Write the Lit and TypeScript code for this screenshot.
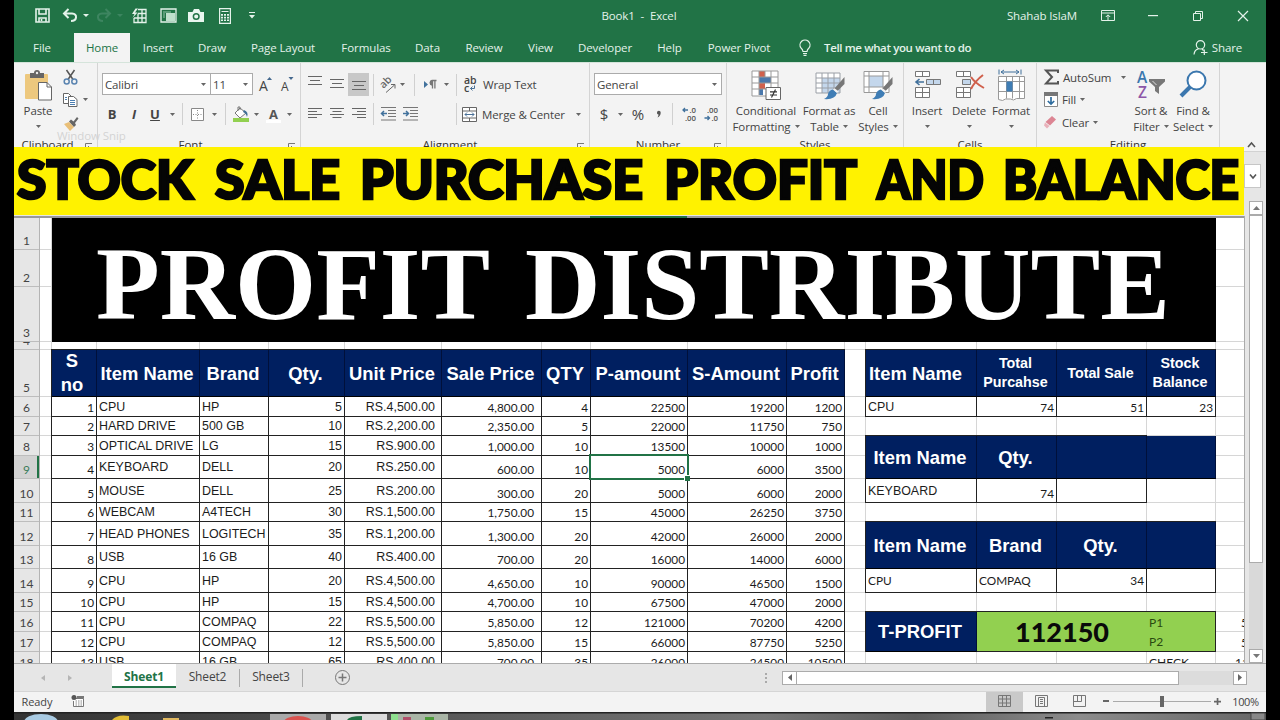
import { LitElement, html, svg, css, nothing } from "lit";
import { customElement } from "lit/decorators.js";

const COLS = [12, 45, 103, 69, 76, 97, 100, 49, 97, 99, 58, 21, 111, 80, 90, 69, 29];
const ROWS = [32, 37, 55, 8, 47, 20, 19, 20, 23, 24, 19, 24, 23, 24, 19, 20, 20, 20];

const ITEMS: string[][] = [
  ["1", "CPU", "HP", "5", "RS.4,500.00", "4,800.00", "4", "22500", "19200", "1200"],
  ["2", "HARD DRIVE", "500 GB", "10", "RS.2,200.00", "2,350.00", "5", "22000", "11750", "750"],
  ["3", "OPTICAL DRIVE", "LG", "15", "RS.900.00", "1,000.00", "10", "13500", "10000", "1000"],
  ["4", "KEYBOARD", "DELL", "20", "RS.250.00", "600.00", "10", "5000", "6000", "3500"],
  ["5", "MOUSE", "DELL", "25", "RS.200.00", "300.00", "20", "5000", "6000", "2000"],
  ["6", "WEBCAM", "A4TECH", "30", "RS.1,500.00", "1,750.00", "15", "45000", "26250", "3750"],
  ["7", "HEAD PHONES", "LOGITECH", "35", "RS.1,200.00", "1,300.00", "20", "42000", "26000", "2000"],
  ["8", "USB", "16 GB", "40", "RS.400.00", "700.00", "20", "16000", "14000", "6000"],
  ["9", "CPU", "HP", "20", "RS.4,500.00", "4,650.00", "10", "90000", "46500", "1500"],
  ["10", "CPU", "HP", "15", "RS.4,500.00", "4,700.00", "10", "67500", "47000", "2000"],
  ["11", "CPU", "COMPAQ", "22", "RS.5,500.00", "5,850.00", "12", "121000", "70200", "4200"],
  ["12", "CPU", "COMPAQ", "12", "RS.5,500.00", "5,850.00", "15", "66000", "87750", "5250"],
  ["13", "USB", "16 GB", "65", "RS.400.00", "700.00", "35", "26000", "24500", "10500"],
];
const KINDS = ["num", "txt", "txt", "qty", "rs", "num sale", "num", "num", "num", "num"];
const HEADS = ["S no", "Item Name", "Brand", "Qty.", "Unit Price", "Sale Price", "QTY", "P-amount", "S-Amount", "Profit"];

interface Cell { r: number; c: number; rs?: number; cs?: number; k: string; t: string; }

const CELLS: Cell[] = [
  ...HEADS.map((t, i) => ({ r: 5, c: i + 2, k: "head first", t })),
  ...ITEMS.flatMap((row, r) => row.map((t, i) => ({ r: r + 6, c: i + 2, k: "box " + KINDS[i], t }))),
  { r: 5, c: 13, k: "head left", t: "Item Name" },
  { r: 5, c: 14, k: "head small", t: "Total Purcahse" },
  { r: 5, c: 15, k: "head small", t: "Total Sale" },
  { r: 5, c: 16, k: "head small", t: "Stock Balance" },
  { r: 6, c: 13, k: "box txt", t: "CPU" },
  { r: 6, c: 14, k: "box num", t: "74" },
  { r: 6, c: 15, k: "box num", t: "51" },
  { r: 6, c: 16, k: "box num", t: "23" },
  { r: 8, c: 13, rs: 2, k: "head", t: "Item Name" },
  { r: 8, c: 14, rs: 2, k: "head", t: "Qty." },
  { r: 8, c: 15, rs: 2, k: "head", t: "" },
  { r: 8, c: 16, rs: 2, k: "head", t: "" },
  { r: 10, c: 13, k: "box txt", t: "KEYBOARD" },
  { r: 10, c: 14, k: "box num", t: "74" },
  { r: 10, c: 15, k: "box num", t: "" },
  { r: 12, c: 13, rs: 2, k: "head", t: "Item Name" },
  { r: 12, c: 14, rs: 2, k: "head", t: "Brand" },
  { r: 12, c: 15, rs: 2, k: "head", t: "Qty." },
  { r: 12, c: 16, rs: 2, k: "head", t: "" },
  { r: 14, c: 13, k: "box cal", t: "CPU" },
  { r: 14, c: 14, k: "box cal", t: "COMPAQ" },
  { r: 14, c: 15, k: "box cal end", t: "34" },
  { r: 14, c: 16, k: "box num", t: "" },
  { r: 16, c: 13, rs: 2, k: "head", t: "T-PROFIT" },
  { r: 16, c: 14, rs: 2, cs: 2, k: "total", t: "112150" },
  { r: 16, c: 16, k: "green", t: "P1" },
  { r: 17, c: 16, k: "green last", t: "P2" },
  { r: 18, c: 16, k: "plain", t: "CHECK" },
  { r: 16, c: 17, k: "plain cut", t: "56075" },
  { r: 17, c: 17, k: "plain cut", t: "56075" },
  { r: 18, c: 17, k: "plain cut wide", t: "112150" },
];

/* Left and top edges of the boxed ranges: [row, col, rowSpan, colSpan] */
const EDGES = [[5, 2, 14, 10], [5, 13, 2, 4], [8, 13, 3, 3], [12, 13, 3, 4], [16, 13, 2, 4]];

const dd = html`<svg class="dd" width="5" height="3" viewBox="0 0 5 3"><path d="M0 0h5L2.5 3z" fill="#666"/></svg>`;
const sep = html`<i class="sep"></i>`;
const launch = html`<svg class="launch" width="8" height="8" viewBox="0 0 8 8" fill="none" stroke="#777"><path d="M.5 7V.5H7M3 3l4 4M7 4v3H4"/></svg>`;
const lines = (ws: number[], mode: string, step = 3) => html`<svg width="14" height="${ws.length * step}" viewBox="0 0 14 ${ws.length * step}" stroke="#666">
  ${ws.map((w, i) => { const x = mode === "l" ? 0 : mode === "r" ? 14 - w : (14 - w) / 2; return svg`<path d="M${x} ${i * step + 0.5}h${w}"/>`; })}</svg>`;

const iconPaste = html`<svg width="30" height="32" viewBox="0 0 30 32"><rect x="2" y="4" width="23" height="25" rx="1" fill="#edc87e"/><path d="M7 3h4a3 3 0 0 1 6 0h4v5H7z" fill="#666"/><circle cx="14" cy="3" r="1.2" fill="#eee"/><path d="M15.500 12.500h8.500l4.500 4.500v13H15.500z" fill="#fff" stroke="#666"/><path d="M24 12.500V17h4.500" fill="none" stroke="#666"/></svg>`;
const iconCut = html`<svg width="15" height="15" viewBox="0 0 15 15" fill="none" stroke-width="1.500"><path d="M3.500 0l6.500 9.500M11.500 0L5 9.500" stroke="#555"/><circle cx="3.700" cy="11.500" r="2.500" stroke="#5a84b0"/><circle cx="11.300" cy="11.500" r="2.500" stroke="#5a84b0"/></svg>`;
const iconCopy = html`<svg width="15" height="14" viewBox="0 0 15 14" fill="#fff" stroke="#666"><path d="M.5.5h5l3 3v7h-8z"/><path d="M5.500 3.500h5l3.500 3v7H5.500z"/><path d="M7 7.500h5M7 9.500h5M7 11.500h5M2 4.500h2M2 6.500h2" stroke="#4c7eb0"/></svg>`;
const iconBrush = html`<svg width="16" height="14" viewBox="0 0 16 14"><path d="M1 7l5-2 5 5-4 4z" fill="#e9bf78"/><path d="M6 4.500l2-2 2.500 2L14 0l1.500 1.500L12 6l1 2-2 2z" fill="#666"/></svg>`;
const iconBorders = html`<svg width="13" height="13" viewBox="0 0 13 13" fill="#fff" stroke="#888"><path d="M.5.5h12v12H.5z"/><path d="M6.500 2v10M2 6.500h10" stroke-dasharray="1 1.500"/></svg>`;
const iconBucket = html`<svg width="17" height="17" viewBox="0 0 17 17"><path d="M3 7l5-5 6 5-6 5z" fill="#fff" stroke="#777"/><path d="M6 5V1h2v3" fill="none" stroke="#777"/><path d="M12 4q5 2 3 7-1-4-4-5z" fill="#3f6f96"/><path d="M1 12h16v4H1z" fill="#92d050"/></svg>`;
const iconFontColor = html`<svg width="15" height="17" viewBox="0 0 15 17"><text x="7.500" y="12.500" text-anchor="middle" font-family="Open Sans, sans-serif" font-size="13" font-weight="700" fill="#555">A</text><path d="M0 14h15v3H0z" fill="#fff"/></svg>`;
const iconGrow = html`<svg width="14" height="17" viewBox="0 0 14 17"><text x="1" y="14.500" font-family="Open Sans, sans-serif" font-size="14" fill="#444">A</text><path d="M9 4h5l-2.500-3z" fill="#44688e"/></svg>`;
const iconShrink = html`<svg width="14" height="17" viewBox="0 0 14 17"><text x="0" y="14.500" font-family="Open Sans, sans-serif" font-size="12" fill="#444">A</text><path d="M7.500 1h5L10 4z" fill="#44688e"/></svg>`;
const iconOrient = html`<svg width="18" height="16" viewBox="0 0 18 16"><text transform="translate(4.500 12) rotate(-45)" font-family="Open Sans, sans-serif" font-size="10.500" font-weight="600" fill="#666">ab</text><path d="M7 15.500L15.500 8M12 7.500h4v4" fill="none" stroke="#666"/></svg>`;
const iconPilcrow = html`<svg width="13" height="10" viewBox="0 0 13 10"><path d="M0 1l4 3.500L0 8z" fill="#41719c"/><path d="M8 5a2.300 2.300 0 0 1 0-4.500h4.500M8.500.5v8M10.900.5v8" fill="none" stroke="#777" stroke-width="1.300"/><path d="M8 .5h1v4.500H8a2.200 2.200 0 0 1 0-4.500z" fill="#777"/></svg>`;
const iconWrap = html`<svg width="14" height="17" viewBox="0 0 14 17"><text x="1" y="8" font-family="Open Sans, sans-serif" font-size="10.500" font-weight="600" fill="#444">ab</text><text x="1" y="15.500" font-family="Open Sans, sans-serif" font-size="10.500" font-weight="600" fill="#444">c</text><path d="M11.500 9.500v3H7.500M9.500 10.500l-2 2 2 2" fill="none" stroke="#4a7198"/></svg>`;
const iconMerge = html`<svg width="15" height="15" viewBox="0 0 15 15" fill="#fff" stroke="#666"><path d="M.5.5h14v14H.5zM.5 4h14M.5 11h14M7.500.5V4M7.500 11v3.500"/><path d="M3 7.500h9M5 5.500l-2 2 2 2M10 5.500l2 2-2 2" fill="none" stroke="#4a7198"/></svg>`;
const indent = (d: string) => html`<svg width="16" height="14" viewBox="0 0 16 14" fill="none" stroke="#777"><path d="M1 .5h15M8 3.500h8M8 6.500h8M8 9.500h8M1 13h15"/><path d="${d}" stroke="#41719c" stroke-width="1.500"/></svg>`;
const decimals = (top: string, bottom: string, left: boolean) => html`<svg width="16" height="16" viewBox="0 0 16 16" font-family="Open Sans, sans-serif" font-size="7.800" font-weight="600" fill="#555"><text x="15" y="7" text-anchor="end">${top}</text><text x="15" y="14.500" text-anchor="end">${bottom}</text><path d="${left ? "M2 4h5M4 2L2 4l2 2" : "M1.500 12h5M4.500 10l2 2-2 2"}" fill="none" stroke="#41719c" stroke-width="1.300"/></svg>`;
const iconCond = html`<svg width="30" height="31" viewBox="0 0 30 31"><path d="M1 1h26v25H1z" fill="#fff"/><path d="M8 1h6v6H8zM8 13h6v6H8z" fill="#d0604c"/><path d="M8 7h12v6H8zM8 19h4v6H8z" fill="#4a78ac"/><path d="M1 1h26v25H1zM8 1v24M20 1v24M1 7h26M1 13h26M1 19h26M14 1v6" fill="none" stroke="#999"/><path d="M15 17.500h14.500v12H15z" fill="#fff" stroke="#666"/><path d="M19 21.800h7M19 25h7M24.500 19.500l-4 8" stroke="#333" stroke-width="1.200"/></svg>`;
const brush = svg`<path d="M30.500 7v7l-7.500 7.500-3-2.500z" fill="#777"/><path d="M19 19.500l4 3.500q-2 7-13 6 4-2 4-5 1-4 5-4.500z" fill="#3f7db5"/><path d="M19 19.500l4 3.500 1.500-1.800-4-3z" fill="#f3f3f3"/>`;
const iconTable = html`<svg width="31" height="31" viewBox="0 0 31 31"><path d="M2 3h24v20H2z" fill="#fff"/><path d="M8 8h18v15H8z" fill="#c4d7ec"/><path d="M2 3h24v20H2zM2 8h24M2 13h24M2 18h24M8 3v20M14 3v20M20 3v20" fill="none" stroke="#9a9fa6"/>${brush}</svg>`;
const iconCellStyles = html`<svg width="31" height="31" viewBox="0 0 31 31"><path d="M2 1.500h25v21H2z" fill="#fff"/><path d="M7 6h14v11H7z" fill="#c4d7ec"/><path d="M2 1.500h25v21H2zM2 6h25M2 17h25M7 1.500v21M21 1.500v21" fill="none" stroke="#999"/>${brush}</svg>`;
const iconInsert = html`<svg width="28" height="30" viewBox="0 0 28 30" fill="#fff" stroke="#777"><path d="M2.500 1.500h14v5h-14zM9.500 1.500v5M2.500 17.500h14v10h-14zM2.500 22.500h14M9.500 17.500v10"/><path d="M13.500 9.500h14v5h-14zM20.500 9.500v5" fill="#c4d7ec"/><path d="M3 12h8M6.500 9L3 12l3.500 3" fill="none" stroke="#41719c" stroke-width="1.600"/></svg>`;
const iconDelete = html`<svg width="30" height="30" viewBox="0 0 30 30" fill="#fff" stroke="#777"><path d="M2.500 1.500h14v5h-14zM9.500 1.500v5M2.500 17.500h14v10h-14zM2.500 22.500h14M9.500 17.500v10"/><path d="M8.500 9.500h8v5h-8z" fill="#c4d7ec"/><path d="M17 7q4 6 13 11M29 5q-8 6-12 14" fill="none" stroke="#d0604c" stroke-width="2"/></svg>`;
const iconFormat = html`<svg width="28" height="32" viewBox="0 0 28 32" fill="#fff" stroke="#999"><path d="M1.500 6.500h26v22h-8l-3 1.500-3-1h-5l-3 1.500-4-1zM1.500 11.500h26M1.500 21.500h26M9.500 6.500v22M15.500 6.500v22M22.500 6.500v22"/><path d="M9.500 11.500h6v10h-6z" fill="#3f7db5" stroke="none"/><path d="M2 -.5v5M24 -.5v5M4 2h18M7 0L4 2l3 2M19 0l3 2-3 2" fill="none" stroke="#41719c"/></svg>`;
const iconSum = html`<svg width="15" height="16" viewBox="0 0 15 16" fill="none" stroke="#555" stroke-width="2"><path d="M14 4V1.500H2L8 8l-6 6.500h12V12"/></svg>`;
const iconFill = html`<svg width="14" height="15" viewBox="0 0 14 15"><path d="M.5.5h13v14H.5z" fill="#fff" stroke="#888"/><path d="M0 0h14v4H0z" fill="#777"/><path d="M7 5v7M3.800 9L7 12l3.200-3" fill="none" stroke="#2e6c9e" stroke-width="1.700"/></svg>`;
const iconClear = html`<svg width="14" height="13" viewBox="0 0 14 13"><path d="M8 0l4 3.500-6 6L1.500 6z" fill="#dc8593"/><path d="M1 6.500L5.500 10 3 12.500 0 9.500z" fill="#e9b1ba"/></svg>`;
const iconSort = html`<svg width="28" height="30" viewBox="0 0 28 30"><text x="0" y="13" font-family="Open Sans, sans-serif" font-size="15.500" font-weight="600" fill="#3b77ae">A</text><text x="1" y="28" font-family="Open Sans, sans-serif" font-size="15.500" font-weight="600" fill="#8d57a8">Z</text><path d="M12 9h16v2.500L22 17v7l-4-3v-4l-6-5.500z" fill="#777"/><path d="M15.500 11l4 4" stroke="#ddd"/></svg>`;
const iconFind = html`<svg width="28" height="30" viewBox="0 0 28 30" fill="none"><circle cx="17.500" cy="10.500" r="9" fill="#fff" stroke="#3b77ae" stroke-width="2"/><path d="M11 17L2 26" stroke="#3b77ae" stroke-width="4"/></svg>`;

const big = (icon: unknown, a: string, b: string) => html`<div class="big">${icon}<span>${a}</span><span class="l2">${b}${dd}</span></div>`;

@customElement("app-root")
export class AppRoot extends LitElement {
  static styles = css`
    :host { display: block; width: 1280px; height: 720px; background: #000; overflow: hidden; font-family: "Open Sans", "Noto Sans", sans-serif; font-size: 11.5px; color: #444; }
    * { box-sizing: border-box; }
    svg { display: block; flex: none; overflow: visible; }
    .window { position: relative; margin: 0 14px; width: 1252px; height: 720px; display: flex; flex-direction: column; background: #e6e6e6; overflow: hidden; white-space: nowrap; }
    .title { height: 33px; flex: none; background: #217346; color: #e4f2ea; display: grid; grid-template-columns: 14px 28px 28px 4px 30px 3px 36px 23px 32px 25px 30px 744px 66px 62px 28px 62px 28px; align-items: center; justify-items: center; padding-bottom: 2px; }
    .title .user { justify-self: end; letter-spacing: -0.12px; }
    .title .doc { letter-spacing: -0.15px; word-spacing: 3px; }
    .tabs { height: 29px; flex: none; background: #217346; color: #e4f2ea; display: grid; grid-template-columns: 60px 56px 56px 52px 90px 76px 47px 66px 47px 82px 47px 92px 39px 350px 52px; align-items: center; justify-items: center; letter-spacing: -0.09px; }
    .tabs .tab:first-child { margin-right: 4px; }
    .tabs .on { background: #f3f3f3; color: #217346; align-self: stretch; justify-self: stretch; display: flex; align-items: center; justify-content: center; }
    .tabs .tell { justify-self: start; font-weight: 600; letter-spacing: -0.37px; }
    .tabs .share { display: flex; align-items: center; gap: 4px; margin-left: 35px; }
    .ribbon { height: 90px; flex: none; display: flex; background: #f3f3f3; border-top: 1px solid #d5e4db; border-bottom: 1px solid #d2d2d2; }
    .group { height: 89px; position: relative; flex: none; padding-top: 10px; border-right: 1px solid #d4d4d4; display: flex; flex-direction: column; }
    .group .cap { margin-top: auto; height: 15px; line-height: 15px; text-align: center; color: #333; }
    .group .launch { position: absolute; right: 4px; top: 80px; }
    .clip { width: 84px; } .font { width: 203px; } .align { width: 289px; } .number { width: 137px; }
    .clip .cap { padding-right: 16px; } .font .cap { padding-right: 17px; } .align .cap { padding-left: 10px; }
    .styles { width: 177px; } .cells { width: 133px; } .editing { width: 183px; }
    .row { display: grid; height: 22px; align-items: center; justify-items: center; margin-bottom: 8px; }
    .font .r1 { grid-template-columns: 4px 109px 42px 24px 22px; }
    .font .r2 { grid-template-columns: 28px 16px 26px 8px 12px 18px 16px 6px 24px 8px 26px 6px; font-size: 13px; }
    .align .r1 { grid-template-columns: 28px 16px 27px 3px 25px 4px 20px 13px 18px 2px 25px 84px; }
    .align .r2 { grid-template-columns: 28px 16px 27px 3px 25px 20px 35px 2px 25px 84px 24px; }
    .align .txt { justify-self: start; letter-spacing: -0.12px; }
    .align .r1 .txt { margin-left: 1px; }
    .align .down { background: #c8c8c8; width: 21px; height: 23px; display: grid; place-items: center; padding-top: 5px; }
    .number .r1 { grid-template-columns: 4px 128px; }
    .number .r2 { grid-template-columns: 28px 4px 32px 10px 17px 16px 28px; font-size: 15px; }
    .combo { justify-self: stretch; height: 22px; background: #fff; border: 1px solid #ababab; display: flex; align-items: center; justify-content: space-between; padding: 0 4px 0 2px; letter-spacing: -0.15px; }
    .combo + .combo { border-left: none; }
    .sep { width: 1px; height: 22px; background: #d0d0d0; }
    .up { align-self: start; margin-top: 3px; }
    .bigs { display: grid; justify-items: center; height: 64px; margin-top: -3px; }
    .styles .bigs { grid-template-columns: 78px 48px 50px; }
    .cells .bigs { grid-template-columns: 46px 38px 46px; }
    .editing .bigs { grid-template-columns: 93px 42px 42px; }
    .clip .bigs { grid-template-columns: 48px 17px 12px; }
    .big { display: grid; grid-template-rows: 32px 16px 16px; justify-items: center; align-items: center; letter-spacing: -0.1px; }
    .big svg { align-self: start; }
    .big .l2 { display: flex; align-items: center; gap: 4px; }
    .big .l2 svg { align-self: center; }
    .stack { display: grid; grid-template-rows: 15px 29px 20px; align-items: center; justify-items: center; }
    .list { display: grid; grid-template-rows: 14px 30px 16px; align-items: center; justify-self: start; padding-left: 7px; letter-spacing: -0.15px; }
    .list div { display: flex; align-items: center; gap: 4px; }
    .list .far .dd { margin-left: 6px; }
    .snip { position: absolute; left: 43px; top: 128px; color: #d4d4d4; font-size: 11.5px; letter-spacing: -0.1px; }
    .chev { margin: 79px 0 0 27px; }
    .bar { height: 64px; flex: none; background: #e6e6e6; display: grid; grid-template-columns: 1230px 17px; }
    .bar .box { grid-column: 2; margin-top: 12px; width: 17px; height: 24px; background: #fff; border: 1px solid #c6c6c6; display: grid; place-items: center; }
    .banner { position: absolute; left: 0; top: 147px; }
    .main { height: 447px; flex: none; display: grid; grid-template-columns: 1231px 4px 14px; position: relative; }
    .sheet { display: grid; grid-template-columns: 26px 1205px; grid-template-rows: 2px 445px; height: 447px; overflow: hidden; border-right: 1px solid #ababab; }
    .heads { grid-column: 1 / 3; background: #999; padding-left: 576px; }
    .heads i { display: block; width: 97px; height: 2px; background: #217346; }
    .rows { display: grid; border-right: 1px solid #b4b4b4; background: #e6e6e6; align-content: start; font-family: Lato, sans-serif; font-size: 12px; }
    .rows div { border-bottom: 1px solid #bdbdbd; display: flex; align-items: flex-end; justify-content: center; line-height: 14px; padding-bottom: 1px; overflow: hidden; }
    .rows .sel { background: #d2d2d2; color: #3b7d5b; box-shadow: inset -2px 0 #217346; }
    .grid { display: grid; background: #fff; position: relative; color: #1c1c1c; align-content: start; }
    .g { border-right: 1px solid #d6d6d6; border-bottom: 1px solid #d6d6d6; }
    .c { display: flex; min-width: 0; min-height: 0; overflow: hidden; }
    .box { border-right: 1px solid #222; border-bottom: 1px solid #222; background: #fff; }
    .head { background: #001f60; color: #fff; border-right: 1px solid #00103a; border-bottom: 1px solid #000; font: bold 18.4px/23px "Liberation Sans", sans-serif; align-items: center; justify-content: center; text-align: center; padding-right: 2px; }
    .head.first.n0 { white-space: normal; padding: 0 10px 0 6px; line-height: 24px; }
    .head.left { justify-content: flex-start; padding: 0 0 0 3px; }
    .head.small { font-size: 14.3px; line-height: 19px; white-space: normal; }
    .txt.c, .qty, .rs { font: 12.45px/18px "Liberation Sans", sans-serif; align-items: center; }
    .txt.c { padding-left: 2px; }
    .qty { justify-content: flex-end; padding-right: 2px; }
    .rs { justify-content: flex-end; padding-right: 6px; }
    .num { font: 11.8px/14px Lato, sans-serif; align-items: flex-end; justify-content: flex-end; padding: 0 2px 1px 0; }
    .sale { padding-right: 7px; }
    .cal { font: 11.8px/14px Lato, sans-serif; align-items: center; padding-left: 2px; }
    .cal.end { justify-content: flex-end; padding-right: 2px; }
    .total { background: #92d050; border-bottom: 1px solid #222; font: 900 27px/34px Lato, sans-serif; align-items: center; justify-content: center; color: #0a0a0a; }
    .green { background: #92d050; border-right: 1px solid #222; font: 12px/14px Lato, sans-serif; align-items: flex-end; padding: 0 0 2px 2px; color: #2a4a10; }
    .green.last { border-bottom: 1px solid #222; }
    .plain { font: 12px/14px Lato, sans-serif; align-items: flex-end; padding: 0 0 2px 2px; }
    .cut { padding-left: 25px; } .cut.wide { padding-left: 19px; }
    .black { background: #000; }
    .edge { border-left: 1px solid #222; border-top: 1px solid #222; margin: -1px 0 0 -1px; pointer-events: none; }
    .cursor { position: relative; border: 2px solid #217346; margin: -2px -1px -1px -2px; }
    .cursor i { position: absolute; right: -3px; bottom: -3px; width: 6px; height: 6px; background: #217346; border: solid #fff; border-width: 1px 0 0 1px; }
    .vscroll { grid-column: 3; margin-top: -15px; display: grid; grid-template-rows: 14px 348px 1fr 14px; background: #d9d9d9; }
    .vscroll div, .hs div { background: #fff; border: 1px solid #ababab; display: grid; place-items: center; }
    .sheets { height: 28px; flex: none; border-top: 1px solid #ababab; display: grid; grid-template-columns: 20px 18px 36px 24px 64px 64px 63px 79px 384px 16px 458px; align-items: center; justify-items: center; font-size: 12px; }
    .sheets .s1 { background: #fff; color: #217346; font-weight: 700; border-bottom: 2px solid #217346; align-self: start; justify-self: stretch; height: 24px; line-height: 25px; text-align: center; letter-spacing: -0.1px; }
    .sheets .s { justify-self: stretch; height: 18px; line-height: 16px; text-align: center; border-right: 1px solid #aaa; letter-spacing: -0.15px; }
    .sheets .dots { display: grid; gap: 2px; margin-right: 16px; } .dots i { width: 2px; height: 2px; background: #aaa; }
    .hs { justify-self: start; height: 14px; display: grid; grid-template-columns: 15px 382px 54px 14px; background: #d9d9d9; }
    .hs i { background: #dcdcdc; }
    .hs div:nth-child(2) { border-left: none; }
    .status { height: 21px; flex: none; background: #f3f3f3; border-top: 1px solid #d5d5d5; display: grid; grid-template-columns: 46px 34px 892px 37px 37px 38px 15px 97px 15px 41px; align-items: center; justify-items: center; font-size: 11px; padding-bottom: 2px; letter-spacing: -0.1px; }
    .status .view { align-self: stretch; justify-self: stretch; display: grid; place-items: center; }
    .status .view.active { background: #c9c9c9; margin-bottom: -2px; padding-bottom: 2px; }
    .status .pct { letter-spacing: -0.35px; }
  `;

  private titleBar() {
    return html`<div class="title">
      <span></span>
      <svg width="15" height="15" viewBox="0 0 15 15" fill="none" stroke="#e4f2ea" stroke-width="1.600"><path d="M1 1h13v13H1zM4 1v5h7V1M4 14v-4h7v4M6.500 11v2"/></svg>
      <svg width="15" height="13" viewBox="0 0 15 13" fill="none" stroke="#e4f2ea" stroke-width="2"><path d="M1 4.500h8q4.500.5 4 4-.5 3.500-5 3.500M5.500 0L1 4.500 5.500 9"/></svg>
      <svg width="6" height="3" viewBox="0 0 6 3"><path d="M0 0h6L3 3z" fill="#e4f2ea"/></svg>
      <svg width="15" height="13" viewBox="0 0 15 13" fill="none" stroke="#3d8560" stroke-width="2"><path d="M14 4.500H6q-4.500.5-4 4 .5 3.500 5 3.500M9.500 0L14 4.500 9.500 9"/></svg>
      <svg width="6" height="3" viewBox="0 0 6 3"><path d="M0 0h6L3 3z" fill="#3d8560"/></svg>
      <svg width="16" height="16" viewBox="0 0 16 16" fill="none" stroke="#e4f2ea" stroke-width="1.300"><path d="M7 1.500h8v13H3V10M7 5.500h8M3 10h12M11 1.500v13M7 5.500v9"/><path d="M4.500.5L1 6h2.500L1.500 10 6.500 4.500H4L7 .5z" fill="#e4f2ea" stroke="none"/></svg>
      <svg width="17" height="15" viewBox="0 0 17 15"><path d="M1 1h15v13H1z" fill="none" stroke="#e4f2ea" stroke-width="1.300"/><path d="M6 5h9v8H6z" fill="#bfe0cd"/><path d="M3 3h8v2H5v5H3z" fill="#5a9c78"/></svg>
      <svg width="16" height="13" viewBox="0 0 16 13"><path d="M0 3h4.500L6 0h5l1.500 3H16v10H0z" fill="#e9f6ef"/><circle cx="8.200" cy="7.500" r="2.800" fill="none" stroke="#217346" stroke-width="1.500"/></svg>
      <svg width="12" height="16" viewBox="0 0 12 16" fill="none" stroke="#e4f2ea" stroke-width="1.200"><path d="M.6.6h10.800v14.800H.6zM2.500 3.500h7"/><path d="M3 6v8M6 6v8M9 6v8" stroke-width="2" stroke-dasharray="1.700 1"/></svg>
      <svg width="6" height="7" viewBox="0 0 6 7" fill="#e4f2ea"><path d="M0 0h6v1H0zM0 3h6L3 6.500z"/></svg>
      <span class="doc">Book1 - Excel</span><span class="user">Shahab IslaM</span>
      <svg width="14" height="11" viewBox="0 0 14 11" fill="none" stroke="#e4f2ea"><path d="M.5.5h13v10H.5zM.5 3h13M7 10V5M4.800 7L7 4.800 9.200 7"/></svg>
      <svg width="10" height="2" viewBox="0 0 10 2"><path d="M0 0h10v1.200H0z" fill="#e4f2ea"/></svg>
      <svg width="10" height="10" viewBox="0 0 10 10" fill="none" stroke="#e4f2ea"><path d="M.5 2.500h7v7h-7zM2.500 2.500v-2h7v7h-2"/></svg>
      <svg width="10" height="10" viewBox="0 0 10 10" stroke="#e4f2ea" stroke-width="1.200"><path d="M0 0l10 10M10 0L0 10"/></svg>
    </div>`;
  }

  private tabBar() {
    const names = ["File", "Home", "Insert", "Draw", "Page Layout", "Formulas", "Data", "Review", "View", "Developer", "Help", "Power Pivot"];
    return html`<div class="tabs">
      ${names.map((n, i) => html`<span class="tab ${i === 1 ? "on" : ""}">${n}</span>`)}
      <svg width="12" height="16" viewBox="0 0 12 16" fill="none" stroke="#e4f2ea" stroke-width="1.200"><path d="M4 11.500Q3.800 9.500 2 8A5 5 0 1 1 10 8Q8.200 9.500 8 11.500zM4 13.500h4M4.500 15.400h3"/></svg>
      <span class="tell">Tell me what you want to do</span>
      <span class="share"><svg width="15" height="15" viewBox="0 0 15 15" fill="none" stroke="#e4f2ea" stroke-width="1.200"><circle cx="7.500" cy="4.800" r="4.200"/><path d="M1 14.500Q1.500 9.500 5.500 8.800M9 9l1.500 1.500M8 12.500h6.500M11.300 9.500v5.500"/></svg>Share</span>
    </div>`;
  }

  private ribbon() {
    return html`<div class="ribbon">
      <div class="group clip"><div class="bigs">
        <div class="big">${iconPaste}<span>Paste</span><span class="l2">${dd}</span></div>
        <div class="stack">${iconCut}${iconCopy}${iconBrush}</div>
        <div class="stack"><span></span>${dd}<span></span></div>
      </div><div class="cap">Clipboard</div>${launch}</div>
      <div class="group font">
        <div class="row r1"><span></span><div class="combo">Calibri${dd}</div><div class="combo">11${dd}</div>${iconGrow}${iconShrink}</div>
        <div class="row r2"><b>B</b><b><i>I</i></b><b><u>U</u></b>${dd}${sep}${iconBorders}${dd}${sep}${iconBucket}${dd}${iconFontColor}${dd}</div>
        <div class="cap">Font</div>${launch}</div>
      <div class="group align">
        <div class="row r1"><div class="up">${lines([14, 10, 14], "c", 4)}</div>${lines([14, 10, 14], "c", 4)}<div class="down">${lines([14, 10, 14], "c", 4)}</div>${sep}${iconOrient}${dd}${sep}${iconPilcrow}${dd}${sep}${iconWrap}<span class="txt">Wrap Text</span></div>
        <div class="row r2">${lines([14, 9, 14, 9], "l")}${lines([14, 9, 14, 9], "c")}${lines([14, 9, 14, 9], "r")}${sep}${indent("M7 6.500H1.500M4 4L1.500 6.500 4 9")}${indent("M1 6.500h5.500M4 4l2.500 2.500L4 9")}<span></span>${sep}${iconMerge}<span class="txt">Merge &amp; Center</span>${dd}</div>
        <div class="cap">Alignment</div>${launch}</div>
      <div class="group number">
        <div class="row r1"><span></span><div class="combo">General${dd}</div></div>
        <div class="row r2"><span>$</span>${dd}<span>%</span><svg width="4" height="7" viewBox="0 0 4 7"><path d="M0 1.500a1.800 1.800 0 0 1 3.700 0Q3.700 5 .5 6.500q1-1.500 1-3A1.700 1.700 0 0 1 0 1.500z" fill="#555"/></svg>${sep}${decimals(".0", ".00", true)}${decimals(".00", ".0", false)}</div>
        <div class="cap">Number</div>${launch}</div>
      <div class="group styles"><div class="bigs">${big(iconCond, "Conditional", "Formatting")}${big(iconTable, "Format as", "Table")}${big(iconCellStyles, "Cell", "Styles")}</div><div class="cap">Styles</div></div>
      <div class="group cells"><div class="bigs">${big(iconInsert, "Insert", "")}${big(iconDelete, "Delete", "")}${big(iconFormat, "Format", "")}</div><div class="cap">Cells</div></div>
      <div class="group editing"><div class="bigs">
        <div class="list"><div class="far">${iconSum}AutoSum${dd}</div><div>${iconFill}Fill${dd}</div><div>${iconClear}Clear${dd}</div></div>
        ${big(iconSort, "Sort &", "Filter")}${big(iconFind, "Find &", "Select")}</div><div class="cap">Editing</div></div>
      <svg class="chev" width="9" height="6" viewBox="0 0 9 6" fill="none" stroke="#555" stroke-width="1.600"><path d="M1 5l3.500-4L8 5"/></svg>
    </div>`;
  }

  private grid() {
    const blank: number[][] = [];
    for (let r = 0; r < ROWS.length; r++) for (let c = 0; c < COLS.length; c++) blank.push([r + 1, c + 1]);
    return html`<div class="sheet">
      <div class="heads"><i></i></div>
      <div class="rows" style="grid-template-rows:${ROWS.map((h) => h + "px").join(" ")}">${ROWS.map((_, i) => html`<div class="${i === 8 ? "sel" : ""}">${i + 1}</div>`)}</div>
      <div class="grid" style="grid-template-rows:${ROWS.map((h) => h + "px").join(" ")};grid-template-columns:${COLS.map((w) => w + "px").join(" ")}">
        ${blank.map(([r, c]) => html`<div class="g" style="grid-area:${r}/${c}"></div>`)}
        ${CELLS.map((c) => html`<div class="c ${c.k} ${c.t === "S no" ? "n0" : ""}" style="grid-area:${c.r}/${c.c}/span ${c.rs ?? 1}/span ${c.cs ?? 1}">${c.t || nothing}</div>`)}
        ${EDGES.map(([r, c, h, w]) => html`<div class="edge" style="grid-area:${r}/${c}/span ${h}/span ${w}"></div>`)}
        <div class="black" style="grid-area:1/2/span 3/span 15">
          <svg width="1164" height="124" viewBox="52 218 1164 124" font-family="Liberation Serif, serif" font-weight="700" font-size="103" fill="#fff">
            <text x="96" y="319" textLength="394" lengthAdjust="spacingAndGlyphs">PROFIT</text>
            <text x="525" y="319" textLength="645" lengthAdjust="spacingAndGlyphs">DISTRIBUTE</text>
          </svg>
        </div>
        <div class="cursor" style="grid-area:9/9"><i></i></div>
      </div>
    </div>`;
  }

  private banner() {
    const words: [string, number, number][] = [["STOCK", 17, 176], ["SALE", 215, 125], ["PURCHASE", 360, 283], ["PROFIT", 664, 193], ["AND", 877, 107], ["BALANCE", 1003, 236]];
    return html`<svg class="banner" width="1230" height="68" viewBox="14 147 1230 68" font-family="Lato, sans-serif" font-weight="900" font-size="52.5" fill="#050505" stroke="#050505" stroke-width="2.600">
      <path d="M14 147h1230v68H14z" fill="#fff200" stroke="none"/>
      ${words.map(([t, x, w]) => svg`<text x="${x}" y="198.500" textLength="${w}" lengthAdjust="spacingAndGlyphs">${t}</text>`)}
    </svg>`;
  }

  render() {
    return html`<div class="window">
      ${this.titleBar()}${this.tabBar()}${this.ribbon()}
      <div class="bar"><div class="box"><svg width="8" height="5" viewBox="0 0 8 5" fill="none" stroke="#555" stroke-width="1.600"><path d="M1 .5L4 4 7 .5"/></svg></div></div>
      <div class="main">${this.grid()}
        <div class="vscroll"><div><svg width="7" height="4" viewBox="0 0 7 4"><path d="M0 4h7L3.500 0z" fill="#777"/></svg></div><div></div><span></span><div><svg width="7" height="4" viewBox="0 0 7 4"><path d="M0 0h7L3.500 4z" fill="#777"/></svg></div></div>
      </div>
      <div class="sheets">
        <span></span><svg width="4" height="6" viewBox="0 0 4 6"><path d="M4 0v6L0 3z" fill="#b5b5b5"/></svg><svg width="4" height="6" viewBox="0 0 4 6"><path d="M0 0v6l4-3z" fill="#b5b5b5"/></svg><span></span>
        <span class="s1">Sheet1</span><span class="s">Sheet2</span><span class="s">Sheet3</span>
        <svg width="15" height="15" viewBox="0 0 15 15" fill="none" stroke="#777"><circle cx="7.500" cy="7.500" r="7"/><path d="M3.500 7.500h8M7.500 3.500v8" stroke-width="1.500"/></svg>
        <span></span><span class="dots"><i></i><i></i><i></i></span>
        <div class="hs"><div><svg width="4" height="7" viewBox="0 0 4 7"><path d="M4 0v7L0 3.500z" fill="#666"/></svg></div><div></div><i></i><div><svg width="4" height="7" viewBox="0 0 4 7"><path d="M0 0v7l4-3.500z" fill="#666"/></svg></div></div>
      </div>
      <div class="status">
        <span>Ready</span>
        <svg width="13" height="12" viewBox="0 0 13 12"><path d="M3 3.500h9.500v8H2.500V6" fill="#fff" stroke="#777"/><path d="M6 1h7v2.500H6z" fill="#777"/><circle cx="3" cy="2.500" r="2.500" fill="#555"/><path d="M4.500 6h7M4.500 8h7M4.500 10h7" stroke="#888" stroke-dasharray="1.500 1"/></svg>
        <span></span>
        <span class="view active"><svg width="13" height="12" viewBox="0 0 13 12" fill="none" stroke="#777"><path d="M.5.5h12v11H.5zM.5 4h12M.5 8h12M4.500.5v11M8.500.5v11"/></svg></span>
        <span class="view"><svg width="13" height="12" viewBox="0 0 13 12" fill="none" stroke="#777"><path d="M.5.5h12v11H.5zM3.500 2.500h6v9h-6zM5 4.500h3M5 6.500h3M5 8.500h3"/></svg></span>
        <span class="view"><svg width="13" height="12" viewBox="0 0 13 12" fill="none" stroke="#777"><path d="M.5.5h12v11H.5zM4.500.5v6M8.500.5v6M.5 6.500h8"/></svg></span>
        <svg width="6" height="2" viewBox="0 0 6 2"><path d="M0 0h6v2H0z" fill="#666"/></svg>
        <svg width="98" height="11" viewBox="0 0 98 11"><path d="M0 5h98v1H0z" fill="#aaa"/><path d="M47 0h4v11h-4z" fill="#666"/></svg>
        <svg width="7" height="7" viewBox="0 0 7 7"><path d="M0 2.700h7v1.700H0zM2.700 0h1.700v7H2.700z" fill="#666"/></svg>
        <span class="pct">100%</span>
      </div>
      <svg width="1252" height="8" viewBox="14 712 1252 8">
        <defs><linearGradient id="tb"><stop offset="0" stop-color="#333"/><stop offset=".2" stop-color="#484848"/><stop offset=".6" stop-color="#777"/><stop offset=".72" stop-color="#5c5c5c"/><stop offset=".85" stop-color="#8c8c8c"/><stop offset="1" stop-color="#666"/></linearGradient></defs>
        <path d="M14 712h1252v8H14z" fill="url(#tb)"/><path d="M14 712h1252v1.500H14z" fill="#222"/>
        <ellipse cx="41" cy="722" rx="17" ry="8" fill="#a9cbe3"/><path d="M112 720q5-6 17-4v4z" fill="#e2bd35"/><path d="M163 718h16v2h-16z" fill="#e0b860"/>
        <path d="M270 714h56v6h-56z" fill="#a9a9a9"/><ellipse cx="298" cy="722" rx="14" ry="6" fill="#d9534f"/>
        <path d="M331 714h56v6h-56z" fill="#dcdcdc"/><path d="M347 720q2-4 15-4v4z" fill="#217346"/>
        <path d="M391 714h57v6h-57z" fill="#a9b5a6"/><path d="M391 714h7v6h-7z" fill="#8fe08f"/><path d="M403 717h8v3h-8z" fill="#b0506a"/><path d="M425 717h9v3h-9z" fill="#4d9a3a"/>
        <path d="M1045 717h8v1.500h-8z" fill="#222"/><path d="M1251 713h14v7h-14z" fill="#888" stroke="#444"/>
      </svg>
      <span class="snip">Window Snip</span>
      ${this.banner()}
    </div>`;
  }
}
